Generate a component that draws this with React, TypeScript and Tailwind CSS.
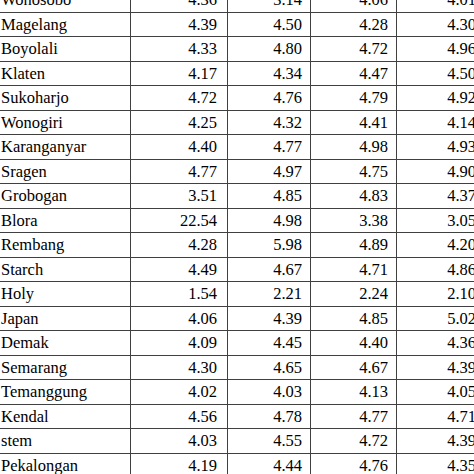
import React from "react";

const rows: [string, string, string, string, string][] = [
  ["Wonosobo", "4.36", "3.14", "4.06", "4.01"],
  ["Magelang", "4.39", "4.50", "4.28", "4.30"],
  ["Boyolali", "4.33", "4.80", "4.72", "4.96"],
  ["Klaten", "4.17", "4.34", "4.47", "4.50"],
  ["Sukoharjo", "4.72", "4.76", "4.79", "4.92"],
  ["Wonogiri", "4.25", "4.32", "4.41", "4.14"],
  ["Karanganyar", "4.40", "4.77", "4.98", "4.93"],
  ["Sragen", "4.77", "4.97", "4.75", "4.90"],
  ["Grobogan", "3.51", "4.85", "4.83", "4.37"],
  ["Blora", "22.54", "4.98", "3.38", "3.05"],
  ["Rembang", "4.28", "5.98", "4.89", "4.20"],
  ["Starch", "4.49", "4.67", "4.71", "4.86"],
  ["Holy", "1.54", "2.21", "2.24", "2.10"],
  ["Japan", "4.06", "4.39", "4.85", "5.02"],
  ["Demak", "4.09", "4.45", "4.40", "4.36"],
  ["Semarang", "4.30", "4.65", "4.67", "4.39"],
  ["Temanggung", "4.02", "4.03", "4.13", "4.05"],
  ["Kendal", "4.56", "4.78", "4.77", "4.71"],
  ["stem", "4.03", "4.55", "4.72", "4.39"],
  ["Pekalongan", "4.19", "4.44", "4.76", "4.35"],
];

export default function App() {
  return (
    <div className="w-[474px] h-[474px] overflow-hidden bg-white">
      <div
        className="-mt-[11.8px] w-[484px] text-[16.5px] text-black"
        style={{ fontFamily: '"Liberation Serif", "Times New Roman", serif' }}
      >
        {rows.map((r) => (
          <div
            key={r[0]}
            className="grid grid-cols-[131px_97px_83px_86px_87px] h-[24.5px] leading-[23.5px] border-b border-[#404040]"
          >
            <div className="pl-[1px] border-r border-[#404040] whitespace-nowrap">{r[0]}</div>
            <div className="pr-[10px] text-right border-r border-[#404040]">{r[1]}</div>
            <div className="pr-[8px] text-right border-r border-[#404040]">{r[2]}</div>
            <div className="pr-[8px] text-right border-r border-[#404040]">{r[3]}</div>
            <div className="pr-[8px] text-right">{r[4]}</div>
          </div>
        ))}
      </div>
    </div>
  );
}
